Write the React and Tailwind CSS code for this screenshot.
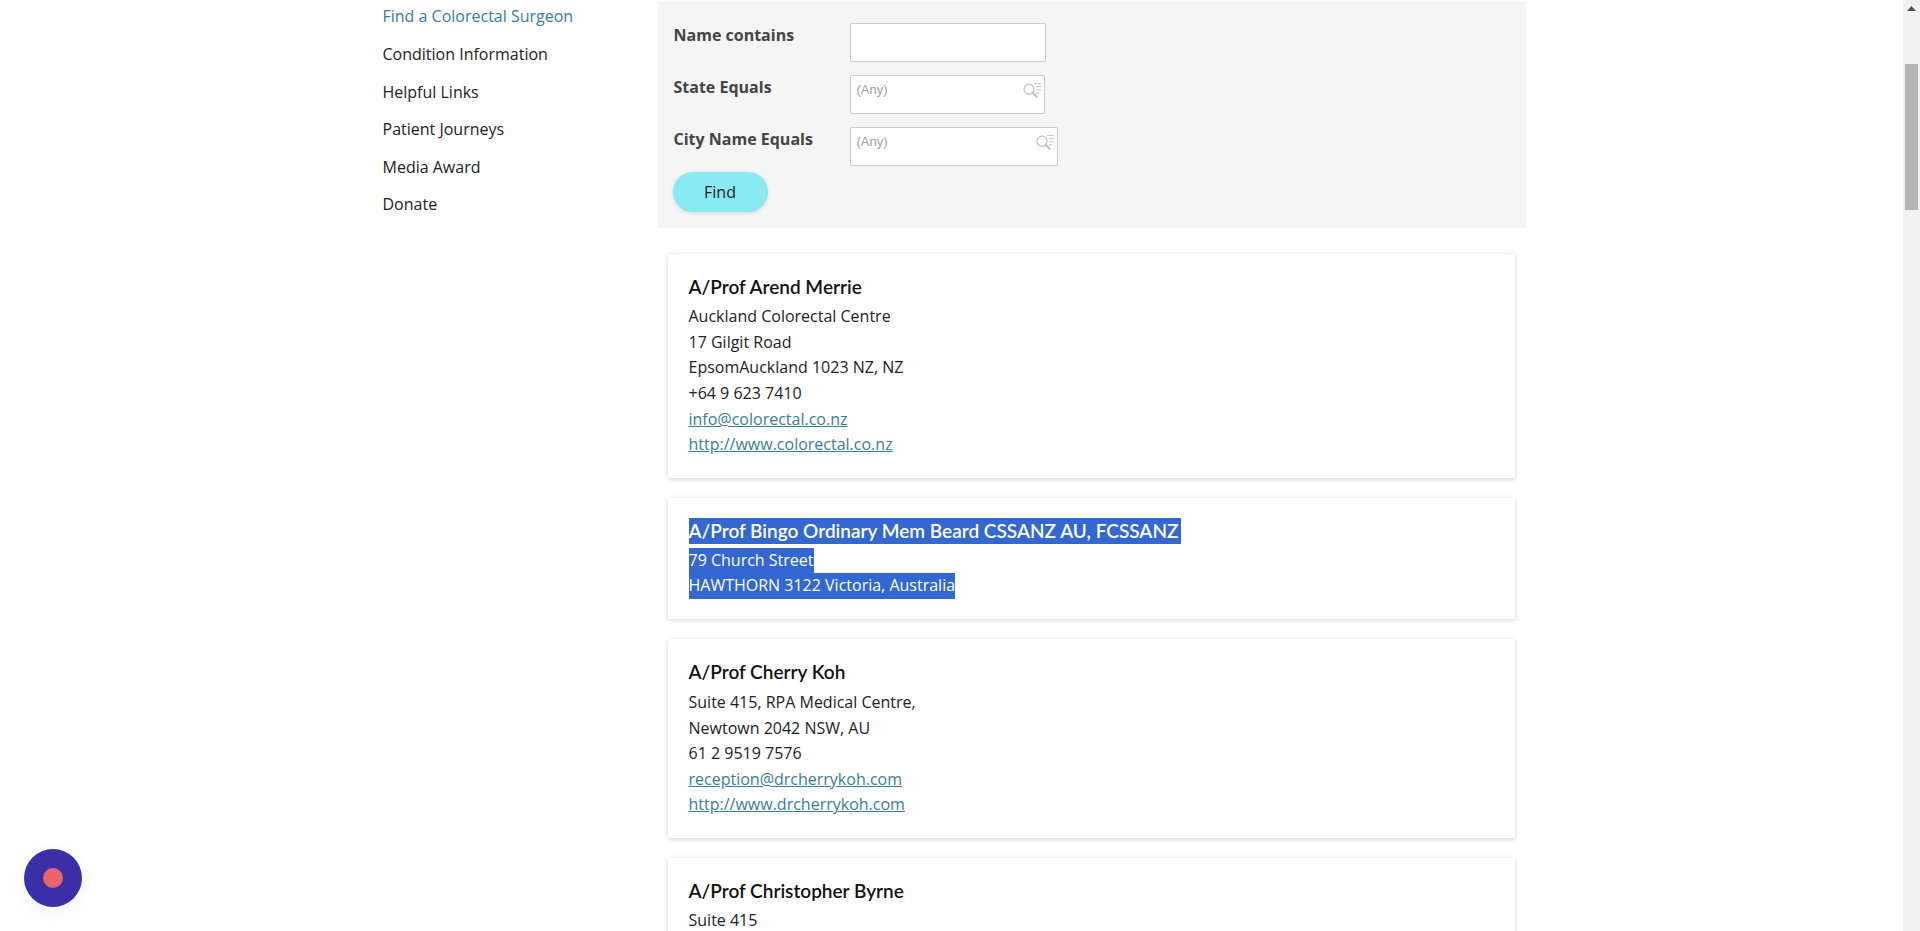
const body = { fontFamily: '"Open Sans", sans-serif' };
const head = { fontFamily: 'Lato, sans-serif' };

function LookupIcon() {
  return (
    <svg width="18" height="15" viewBox="0 0 18 15" fill="none" stroke="#bdbdbd" strokeWidth="1.2">
      <circle cx="6" cy="6.2" r="5" />
      <path d="M9.6 9.8 L14.2 14.2" strokeWidth="1.9" />
      <path d="M11 0.6 H18 M13 3.6 H18 M13.4 7 H18 M13 10 H16" strokeWidth="0.9" />
    </svg>
  );
}

function Lookup({ w }) {
  return (
    <div className={`${w} h-[39px] bg-white border border-[#c9c9c9] rounded-[2px] flex justify-between pl-[6px] pr-[3px] pt-[4px]`}>
      <span className="text-[13px] leading-[20px] text-[#a0a0a0]" style={{ fontFamily: '"Liberation Sans", sans-serif' }}>(Any)</span>
      <span className="pt-[3px]"><LookupIcon /></span>
    </div>
  );
}

function Label({ children }) {
  return <div className="w-[176px] font-bold text-[16px] leading-[24px] text-[#444444]">{children}</div>;
}

function Card({ name, lines = [], links = [], selected, clipped, titleGap = 'mb-[4px]' }) {
  return (
    <div className={`mx-[10.5px] mb-[20px] bg-white shadow-[0_1px_5px_rgba(0,0,0,0.18)] px-[20.5px] pt-[20px] ${clipped ? 'pb-[40px]' : 'pb-[20px]'}`}>
      <h3 className={`text-[19px] leading-[26px] font-semibold ${titleGap} ${selected ? 'w-fit pr-[3px] bg-[#3367d1] text-white' : 'text-[#111111]'}`} style={head}>{name}</h3>
      {lines.map((l) => (
        <div key={l} className={`text-[16px] leading-[25.6px] ${selected ? 'w-fit bg-[#3367d1] text-white' : 'text-[#222222]'}`}>{l}</div>
      ))}
      {links.map((l) => (
        <div key={l} className="text-[16px] leading-[25.6px]">
          <a href="#" className="text-[#3a7d96] underline">{l}</a>
        </div>
      ))}
    </div>
  );
}

const nav = ['Find a Colorectal Surgeon', 'Condition Information', 'Helpful Links', 'Patient Journeys', 'Media Award', 'Donate'];

export default function App() {
  return (
    <div className="relative flex h-[931px] overflow-hidden bg-white" style={body}>
      <main className="flex-1 min-w-0 h-[931px] overflow-hidden">
        <div className="w-[1170px] mx-auto flex">
          <nav className="w-[291px] pl-[16px] pt-[3.4px] shrink-0">
            {nav.map((n, i) => (
              <div key={n} className={`text-[16px] h-[37.6px] leading-[26px] ${i === 0 ? 'text-[#3a7d96]' : 'text-[#222222]'}`}>{n}</div>
            ))}
          </nav>
          <div className="w-[868px] shrink-0 pt-[2px]">
            <div className="bg-[#f5f5f5] pl-[16px] pt-[21px] h-[226px]">
              <div className="flex h-[39px] mb-[13px]">
                <Label>Name contains</Label>
                <div className="w-[196px] h-[39px] bg-white border border-[#c9c9c9] rounded-[2px]" />
              </div>
              <div className="flex h-[39px] mb-[13px]">
                <Label>State Equals</Label>
                <Lookup w="w-[195px]" />
              </div>
              <div className="flex h-[39px]">
                <Label>City Name Equals</Label>
                <Lookup w="w-[208px]" />
              </div>
              <button className="block -ml-[1px] mt-[6px] w-[95px] h-[40px] rounded-full bg-[#8aeaf4] text-[16px] text-[#222222] shadow-[0_1px_4px_rgba(0,0,0,0.12)]">Find</button>
            </div>
            <div className="pt-[26.3px]">
              <Card
                name="A/Prof Arend Merrie"
                lines={['Auckland Colorectal Centre', '17 Gilgit Road', 'EpsomAuckland 1023 NZ, NZ', '+64 9 623 7410']}
                links={['info@colorectal.co.nz', 'http://www.colorectal.co.nz']}
              />
              <Card
                selected
                name="A/Prof Bingo Ordinary Mem Beard CSSANZ AU, FCSSANZ"
                lines={['79 Church Street', 'HAWTHORN 3122 Victoria, Australia']}
              />
              <Card
                titleGap="mb-[5px]"
                name="A/Prof Cherry Koh"
                lines={['Suite 415, RPA Medical Centre,', 'Newtown 2042 NSW, AU', '61 2 9519 7576']}
                links={['reception@drcherrykoh.com', 'http://www.drcherrykoh.com']}
              />
              <Card clipped name="A/Prof Christopher Byrne" lines={['Suite 415']} />
            </div>
          </div>
        </div>
      </main>
      <aside className="w-[17px] shrink-0 h-[931px] bg-[#f1f1f1] flex flex-col items-center">
        <div className="h-[17px] flex items-center justify-center">
          <svg width="9" height="5" viewBox="0 0 9 5"><path d="M0 5 L4.5 0 L9 5 Z" fill="#505050" /></svg>
        </div>
        <div className="mt-[47px] w-[13px] h-[146px] bg-[#b5b5b5]" />
      </aside>
      <div className="absolute left-[24px] bottom-[24px] w-[58px] h-[58px] rounded-full bg-[#3a2fa6] flex items-center justify-center shadow-[0_4px_24px_rgba(0,0,0,0.06)]">
        <div className="w-[20px] h-[20px] rounded-full bg-[#e8656e]" />
      </div>
    </div>
  );
}
